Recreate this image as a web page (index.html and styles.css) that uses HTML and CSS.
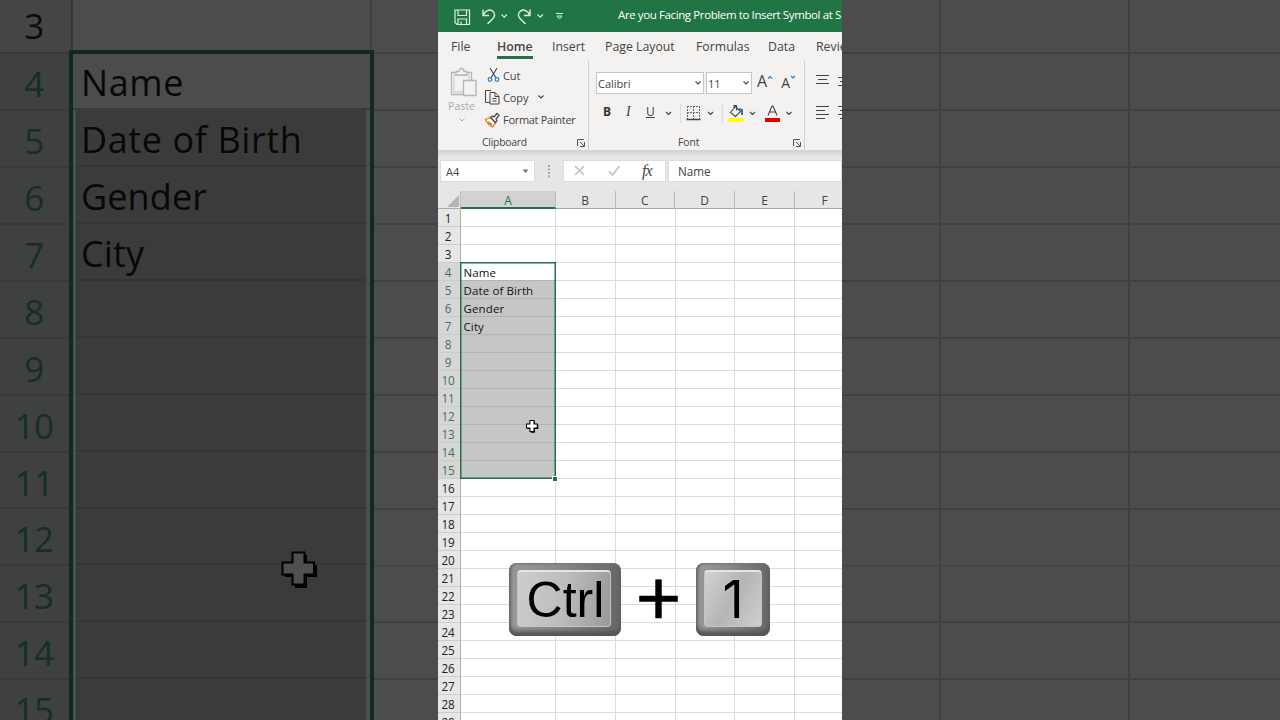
FILE: index.html
```html
<!DOCTYPE html>
<html lang="en">
<head>
<meta charset="utf-8">
<title>Excel shortcut</title>
<link rel="stylesheet" href="styles.css">
</head>
<body>
<main class="stage">
  <section class="backdrop left">
    <div class="big-heads">
      <span class="plain">3</span><span>4</span><span>5</span><span>6</span><span>7</span><span>8</span><span>9</span><span>10</span><span>11</span><span>12</span><span>13</span><span>14</span><span>15</span>
    </div>
    <div class="big-col">
      <div class="big-empty"></div>
      <div class="big-sel">
        <span class="active">Name</span><span class="wide">Date of Birth</span><span>Gender</span><span>City</span><span></span><span></span><span></span><span></span><span></span><span></span><span></span><span></span>
      </div>
    </div>
    <div class="big-rest"></div>
    <svg class="big-cursor" width="38" height="38" viewBox="0 0 38 38"><path d="M14 4h12v10h10v12H26v11H14V26H4V14h10z" fill="#000"/><path d="M11.500 1.500h12v10h9.500v12h-9.500v10h-12v-10H1.500v-12h10z" fill="#505050" stroke="#000" stroke-width="2"/></svg>
  </section>

  <section class="app">
    <header class="titlebar">
      <svg width="130" height="32" viewBox="0 0 130 32" fill="none" stroke="#d9f0e1" stroke-width="1.200">
        <path d="M17 10h14.500v14.500h-12.500l-2-2zM20 10v5.500h8.500v-5.500M20 24v-5h8.500v5M23 21.500v3"/>
        <path d="M45 9.500v6h6M45.300 15c2-4.500 6-6 9-4.200 3.500 2.200 2.500 6 .5 8L49.500 24" stroke-width="1.400"/>
        <path d="M63.500 14.500l2.700 2.700 2.700-2.700M99.500 14.500l2.700 2.700 2.700-2.700"/>
        <path d="M92 9.500v6h-6M91.700 15c-2-4.500-6-6-9-4.200-3.500 2.200-2.500 6-.5 8L87.500 24" stroke-width="1.400"/>
        <path d="M118 13.500h7M119 16l2.500 3 2.500-3z" stroke-width="1"/>
      </svg>
      <span class="doc-title">Are you Facing Problem to Insert Symbol at S</span>
    </header>
    <nav class="tabs">
      <span>File</span><span class="current"><b>Home</b></span><span>Insert</span><span>Page Layout</span><span>Formulas</span><span>Data</span><span>Review</span>
    </nav>
    <div class="ribbon">
      <div class="group clipboard">
        <div class="group-body">
          <div class="paste">
            <svg width="28" height="32" viewBox="0 0 28 32" fill="#f3f2f1" stroke="#b5b5b5" stroke-width="1.300"><path d="M1.500 5.500h20v22h-20z"/><path d="M4 8h15v17H4z" stroke="#d2d2d2"/><path d="M6 8V4.500h3c0-4 5-4 5 0h3V8z"/><path d="M13.500 13.500h12.500v15h-12.500z"/></svg>
            <span>Paste</span>
            <svg width="8" height="6" viewBox="0 0 8 6" fill="none" stroke="#aaa"><path d="M1.500 1.500L4 4l2.500-2.500"/></svg>
          </div>
          <div class="actions">
            <div><svg class="cut" width="15" height="16" viewBox="1 0 15 16" fill="none"><path d="M5 1l6 10M12 1L6 11" stroke="#444" stroke-width="1.100"/><circle cx="5" cy="12.500" r="1.800" stroke="#2580c3" stroke-width="1.200"/><circle cx="12" cy="12.500" r="1.800" stroke="#2580c3" stroke-width="1.200"/></svg><span>Cut</span></div>
            <div><svg class="copy" width="17" height="16" viewBox="0 0 17 16" fill="#f3f2f1" stroke="#444"><path d="M6 13.500H1.500v-12H7"/><path d="M6 3.500h5l4 4v7.500H6zM11 3.500v4h4M8.500 9.500h4M8.500 12h4"/></svg><span>Copy</span><svg class="drop" width="8" height="6" viewBox="0 0 8 6" fill="none" stroke="#444" stroke-width="1.100"><path d="M1.500 1.500L4 4l2.500-2.500"/></svg></div>
            <div><svg class="copy" width="17" height="16" viewBox="0 0 17 16" fill="none"><path d="M1.500 7.500l5-2 5 5-3 4.500c-3-1-5-3.500-7-7.500z" fill="#fff" stroke="#df791f" stroke-width="1.300"/><path d="M4 10l4 3" stroke="#df791f" stroke-width="2"/><path d="M6.500 5.500l2-1.500 1.500 1 3-3.500 2 2-3 3.500 1 1.500-1.500 2z" fill="#f3f2f1" stroke="#444" stroke-width="1.200"/></svg><span class="painter">Format Painter</span></div>
          </div>
        </div>
        <footer><span>Clipboard</span><svg class="launch" width="10" height="10" viewBox="0 0 10 10" fill="none" stroke="#555"><path d="M1.500 8V1.500H8M4 4l4 4M8.500 4v4.500H4"/></svg></footer>
      </div>
      <div class="group font">
        <div class="font-top">
          <div class="combo family"><span>Calibri</span><svg width="8" height="6" viewBox="0 0 8 6" fill="none" stroke="#444" stroke-width="1.100"><path d="M1.500 1.500L4 4l2.500-2.500"/></svg></div>
          <div class="combo size"><span>11</span><svg width="8" height="6" viewBox="0 0 8 6" fill="none" stroke="#444" stroke-width="1.100"><path d="M1.500 1.500L4 4l2.500-2.500"/></svg></div>
          <span class="grow">A<svg width="6" height="5" viewBox="0 0 6 5" fill="none" stroke="#2580c3" stroke-width="1.200"><path d="M1 3.500l2-2 2 2"/></svg></span>
          <span class="grow less">A<svg width="6" height="5" viewBox="0 0 6 5" fill="none" stroke="#2580c3" stroke-width="1.200"><path d="M1 1l2 2 2-2"/></svg></span>
        </div>
        <div class="font-tools">
          <b>B</b><i>I</i><u>U</u>
          <svg width="140" height="20" viewBox="0 0 140 20" fill="none" stroke="#444" stroke-width="1.100">
            <path d="M6 9l2.500 2.500L11 9M48 9l2.500 2.500L53 9M90 9l2.500 2.500L95 9M126.500 9l2.500 2.500L131.500 9"/>
            <path d="M20.500 1v20M62.500 1v20" stroke="#ddd"/>
            <path d="M27 3.500h13M27.500 3v13M39.500 3v13M33.500 3v13M27 9.500h13" stroke="#666" stroke-width="1" stroke-dasharray="2 1"/><path d="M26.500 16.500h14" stroke-width="1.500"/>
            <path d="M70.500 9.500l5-6 5 5-5 5zM74 6V2.500h2.500v5"/><path d="M79 6l3 1v5" stroke="#1769ad" stroke-width="1.800"/>
            <path d="M68 17h15" stroke="#ff0" stroke-width="4"/>
            <path d="M108 12.500L112 3h1l4 9.500M109.500 9h6"/><path d="M105 17h15" stroke="#e00000" stroke-width="4"/>
          </svg>
        </div>
        <footer><span>Font</span><svg class="launch" width="10" height="10" viewBox="0 0 10 10" fill="none" stroke="#555"><path d="M1.500 8V1.500H8M4 4l4 4M8.500 4v4.500H4"/></svg></footer>
      </div>
      <div class="group align">
        <svg width="37" height="60" viewBox="0 0 37 60" fill="none" stroke="#444" stroke-width="1.100"><path d="M11 6.500h13M13 10.500h9M11 14.500h13M33 8.500h9M35 12.500h9M33 16.500h9M11 37.500h13M11 41.500h9M11 45.500h13M11 49.500h9M33 37.500h9M35 41.500h9M33 45.500h9M35 49.500h9"/></svg>
      </div>
    </div>
    <div class="formula-bar">
      <div class="name-box"><span>A4</span><svg width="7" height="5" viewBox="0 0 7 5"><path d="M.5.5h6l-3 3.500z" fill="#777"/></svg></div>
      <svg class="grip" width="4" height="14" viewBox="0 0 4 14" fill="#aaa"><path d="M1 1h2v2H1zM1 4.500h2v2H1zM1 8h2v2H1zM1 11.500h2v2H1z"/></svg>
      <div class="fx-box"><svg width="60" height="20" viewBox="0 0 60 20" fill="none" stroke="#c2c2c2" stroke-width="1.700"><path d="M11 5l9 9M20 5l-9 9M45 10l3.500 4 7-9"/></svg><em>fx</em></div>
      <div class="value-box">Name</div>
    </div>
    <div class="col-heads">
      <span class="corner"><svg width="12" height="12" viewBox="0 0 12 12"><path d="M12 0v12H0z" fill="#b5b5b5"/></svg></span>
      <span class="selected">A</span><span>B</span><span>C</span><span>D</span><span>E</span><span>F</span>
    </div>
    <div class="sheet">
      <div class="row-heads">
        <span>1</span><span>2</span><span>3</span><span class="on">4</span><span class="on">5</span><span class="on">6</span><span class="on">7</span><span class="on">8</span><span class="on">9</span><span class="on">10</span><span class="on">11</span><span class="on">12</span><span class="on">13</span><span class="on">14</span><span class="on">15</span><span>16</span><span>17</span><span>18</span><span>19</span><span>20</span><span>21</span><span>22</span><span>23</span><span>24</span><span>25</span><span>26</span><span>27</span><span>28</span><span>29</span>
      </div>
      <div class="column-a">
        <div class="selection">
          <span class="active">Name</span><span>Date of Birth</span><span>Gender</span><span>City</span><span></span><span></span><span></span><span></span><span></span><span></span><span></span><span></span>
          <i class="handle"></i>
        </div>
      </div>
      <div class="column"></div><div class="column"></div><div class="column"></div><div class="column"></div><div class="column"></div>
    </div>
    <svg class="cursor" width="13" height="13" viewBox="0 0 38 38"><path d="M14 4h12v10h10v12H26v11H14V26H4V14h10z" fill="#000"/><path d="M11.500 1.500h12v10h9.500v12h-9.500v10h-12v-10H1.500v-12h10z" fill="#fff" stroke="#000" stroke-width="3"/></svg>
    <div class="shortcut">
      <kbd class="key ctrl"><span>Ctrl</span></kbd>
      <span class="plus">+</span>
      <kbd class="key one"><span>1</span></kbd>
    </div>
  </section>

  <section class="backdrop right"></section>
</main>
</body>
</html>
```
FILE: styles.css
```css
* { box-sizing: border-box; }
body { margin: 0; background: #4c4c4c; font-family: "Open Sans", "Noto Sans", sans-serif; }
.stage { display: flex; width: 1280px; height: 720px; overflow: hidden; }
svg { display: block; flex: none; }

/* Enlarged, darkened sheet on both sides */
.backdrop { position: relative; width: 438px; height: 720px; overflow: hidden; flex: none; background: #4c4c4c; }
.left { display: flex; }
.big-heads { width: 73px; flex: none; border-right: 2px solid #373737; background: #434343; }
.big-heads span { display: block; height: 56.950px; padding-right: 3px; border-bottom: 2px solid #393939; background: #3f4040; color: #162f22; font-size: 35px; line-height: 59px; text-align: center; letter-spacing: -.5px; }
.big-heads .plain { background: #454545; color: #0c0c0c; line-height: 58px; }
.big-heads span:first-child, .big-empty { margin-top: -3px; }
.big-col { width: 299px; flex: none; }
.big-empty { height: 56.950px; border-right: 2px solid #404040; }
.big-sel { width: 305px; margin: -4px 0 0 -4px; border: 4px solid #0f2b1e; border-bottom: 0; padding: 0 4px 0 3px; position: relative; background: #4b504d; }
.big-sel span { display: block; height: 56.950px; padding-left: 5px; border-bottom: 2px solid #343434; background: #3b3b3b; color: #080808; font-size: 36px; line-height: 60px; letter-spacing: .1px; white-space: nowrap; }
.big-sel .wide { letter-spacing: .6px; }
.big-sel .active { height: 56px; margin: 0 -4px 0 -3px; padding-left: 8px; background: #4c4c4c; border-color: #3b3b3b; line-height: 58px; letter-spacing: .6px; }
.big-rest { flex: 1; background: repeating-linear-gradient(#4c4c4c 0 54.950px, #404040 54.950px 56.950px) 0 -3px / 100% 900px; }
.big-cursor { position: absolute; left: 281px; top: 551px; }
.right { background:
  linear-gradient(#404040, #404040) 97px 0 / 2px 100% no-repeat,
  linear-gradient(#404040, #404040) 286px 0 / 2px 100% no-repeat,
  repeating-linear-gradient(#4c4c4c 0 54.950px, #404040 54.950px 56.950px) 0 -3px / 100% 900px; }

/* Application window */
.app { position: relative; width: 404px; height: 720px; overflow: hidden; flex: none; background: #fff; color: #444; }
.titlebar { display: flex; height: 32px; background: #217545; color: #fff; }
.doc-title { padding-left: 50px; font-size: 11.500px; line-height: 30px; letter-spacing: -.39px; white-space: nowrap; }
.tabs { display: grid; grid-template-columns: 46px 55px 53px 91px 72px 48px 60px; height: 28px; padding-left: 13px; background: #f3f2f1; font-size: 12.300px; line-height: 29px; white-space: nowrap; }
.current b { display: inline-block; height: 27px; border-bottom: 3px solid #217346; font-weight: 600; }
.ribbon { display: flex; height: 90px; background: #f3f2f1; }
.group { display: flex; flex-direction: column; flex: none; }
.group footer { display: flex; margin-top: auto; height: 15px; font-size: 10.300px; line-height: 15px; }
.group footer .launch { margin: 3px 2px 0 auto; }
.clipboard { width: 151px; border-right: 1px solid #d0cfce; }
.group-body { display: flex; }
.paste { display: flex; flex-direction: column; align-items: center; width: 46px; padding: 7px 0 0 5px; color: #aaa; font-size: 10.500px; line-height: 14px; }
.paste span { margin: 0 4px 4px 0; }
.paste svg:last-child { margin-right: 4px; }
.actions { padding-top: 4px; font-size: 11px; letter-spacing: -.1px; }
.actions div { display: flex; align-items: center; height: 22.300px; white-space: nowrap; }
.cut { margin-left: 2px; margin-right: 2px; }
.copy { margin-right: 2px; }
.painter { letter-spacing: -.3px; }
.drop { margin-left: 9px; }
.clipboard footer { padding-left: 44px; letter-spacing: -.2px; }
.font { width: 216px; padding-left: 7px; border-right: 1px solid #d0cfce; }
.font-top { display: flex; padding-top: 12px; }
.combo { display: flex; align-items: center; justify-content: space-between; height: 22px; padding: 0 1px; border: 1px solid #c8c6c4; background: #fff; font-size: 11px; }
.family { width: 108px; }
.size { width: 46px; margin-left: 2px; }
.grow { display: flex; padding-left: 5px; font-size: 16px; line-height: 19px; }
.grow svg { margin-top: 3px; }
.less { padding-left: 8px; font-size: 14px; line-height: 21px; }
.font-tools { display: flex; margin-top: 8px; padding-left: 6px; font-size: 12px; line-height: 19px; }
.font-tools > * { flex: none; }
.font-tools svg { margin: 1px 0 0 1px; }
.font-tools b { width: 24px; padding-left: 1px; color: #333; }
.font-tools i { width: 20px; font-family: "Liberation Serif", serif; font-size: 14px; }
.font-tools u { width: 13px; }
.font footer { padding-left: 82px; }
.align { padding-top: 9px; }

.formula-bar { display: flex; height: 41px; padding: 10px 0 0 2px; background: linear-gradient(#d2d0d1, #e6e6e6 7px); font-size: 11px; }
.formula-bar > div { display: flex; align-items: center; height: 22px; background: #fff; border: 1px solid #dcdcdc; }
.formula-bar .name-box { width: 95px; justify-content: space-between; padding: 0 5px 0 5px; }
.grip { margin: 4px 12px 0; }
.formula-bar .fx-box { width: 103px; }
.fx-box em { padding-left: 18px; font: italic 16px "Liberation Serif", serif; letter-spacing: -1px; }
.formula-bar .value-box { flex: 1; margin-left: 2px; padding-left: 9px; font-size: 11.700px; }

.col-heads { display: grid; grid-template-columns: 23px 95px 59.500px 59.800px 59.800px 60px 60px; height: 18px; background: #e6e6e6; border-bottom: 1px solid #a8a8a8; font-size: 12px; line-height: 19px; text-align: center; color: #444; }
.col-heads span { border-right: 1px solid #bbb; }
.corner { padding: 4px 0 0 9px; }
.col-heads .selected { height: 18px; background: #d2d2d2; border-bottom: 2px solid #217346; color: #217346; }
.sheet { display: flex; }
.row-heads { width: 23px; flex: none; background: #e6e6e6; border-right: 1px solid #b0b0b0; font-size: 11.700px; color: #222; }
.row-heads span { display: block; height: 18px; padding-right: 2px; border-bottom: 1px solid #ccc; line-height: 18px; text-align: center; letter-spacing: -.3px; }
.row-heads .on { background: #d6d6d6; color: #3c7357; }
.column-a, .column { height: 522px; flex: none; border-right: 1px solid #dcdcdc; background: repeating-linear-gradient(#fff 0 17px, #dcdcdc 17px 18px); }
.column-a { width: 95px; padding-top: 53px; }
.column { width: 59.800px; }
.selection { position: relative; width: 96px; margin-left: -1px; height: 217px; padding-top: 1px; }
.selection::after { content: ""; position: absolute; inset: 0; border: 1px solid #217346; box-shadow: inset 0 0 0 .500px #217346; }
.selection span { display: block; height: 18px; padding: 0 0 0 3.500px; border-bottom: 1px solid #b3b3b3; background: #c6c6c6; color: #111; font-size: 11.500px; line-height: 19px; white-space: nowrap; letter-spacing: .12px; }
.selection .active { background: #fff; }
.handle { position: absolute; z-index: 1; right: -1px; bottom: -2px; width: 4px; height: 4px; background: #217346; outline: 1px solid #fff; }
.cursor { position: absolute; left: 88px; top: 420px; }

/* Keyboard shortcut overlay */
.shortcut { position: absolute; left: 71px; top: 563px; display: flex; height: 73px; color: #000; font-family: "Liberation Sans", sans-serif; }
.key { display: block; height: 73px; padding: 7px 8px; border-radius: 8px; background: linear-gradient(90deg, #999, #858585 50%, #666); box-shadow: inset 0 -5px 4px #555, inset 0 1px 2px #777, inset 2px 0 3px #777; font-family: inherit; }
.key span { display: block; height: 57px; border: 1px solid #c5c5c5; border-top: 2px solid #e4e4e4; border-radius: 4px; background: linear-gradient(100deg, #cdcdcd, #bcbcbc 50%, #999); font-size: 50px; line-height: 57px; text-align: center; }
.ctrl { width: 112px; padding-right: 10px; }
.ctrl span { padding-left: 3px; }
.one { width: 74px; }
.one span { background: linear-gradient(120deg, #d2d2d2, #b5b5b5 50%, #cfcfcf); font-family: Inter, sans-serif; font-size: 52px; line-height: 55px; }
.plus { width: 75px; font-size: 78px; line-height: 70px; text-align: center; -webkit-text-stroke: .600px #000; }
```
